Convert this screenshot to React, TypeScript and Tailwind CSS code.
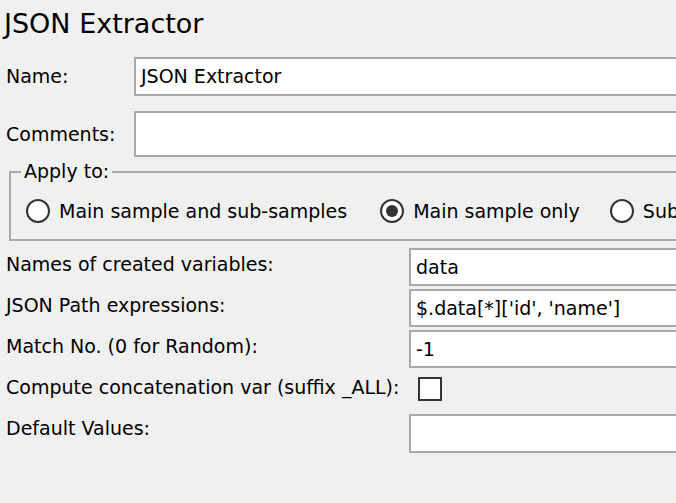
export default function App() {
  const f = { fontFamily: '"DejaVu Sans", sans-serif' };
  const input = "h-full bg-white border-2 border-[#a9a9a9] px-[5px] flex items-center";
  const Radio = ({ on }: { on?: boolean }) => (
    <span className="w-[24px] h-[24px] rounded-full border-2 border-[#333] bg-white flex items-center justify-center shrink-0">
      {on && <span className="w-[12px] h-[12px] rounded-full bg-[#333]" />}
    </span>
  );
  return (
    <div className="w-[676px] h-[503px] bg-[#f0f0f0] overflow-hidden text-[19px] text-black" style={f}>
      <div className="pl-[4px] pt-[6px] h-[48px] text-[27px] leading-[36px]">JSON Extractor</div>
      <div className="flex items-center h-[39px] mt-[9px] pl-[6px]">
        <span className="w-[128px]">Name:</span>
        <div className={input + " flex-1 -mr-[4px]"}>JSON Extractor</div>
      </div>
      <div className="flex items-center h-[46px] mt-[15px] pl-[6px]">
        <span className="w-[128px]">Comments:</span>
        <div className={input + " flex-1 -mr-[4px]"}></div>
      </div>
      <div className="relative ml-[9px] mt-[14px] h-[70px] border-2 border-[#a9a9a9] border-r-0">
        <span className="absolute -top-[15px] left-[10px] px-[3px] bg-[#f0f0f0] leading-[26px]">Apply to:</span>
        <div className="flex items-center h-full pt-[10px] pl-[15px] whitespace-nowrap overflow-hidden">
          <Radio />
          <span className="ml-[9px]">Main sample and sub-samples</span>
          <span className="ml-[33px]"><Radio on /></span>
          <span className="ml-[9px]">Main sample only</span>
          <span className="ml-[30px]"><Radio /></span>
          <span className="ml-[9px]">Sub-samples only</span>
        </div>
      </div>
      <div className="pl-[6px] mt-[7px]">
        {[
          ["Names of created variables:", "data"],
          ["JSON Path expressions:", "$.data[*]['id', 'name']"],
          ["Match No. (0 for Random):", "-1"],
        ].map(([l, v]) => (
          <div key={l} className="flex h-[38px] mb-[3px] items-center">
            <span className="w-[403px] self-start pt-[2px]">{l}</span>
            <div className={input + " flex-1 -mr-[4px]"}>{v}</div>
          </div>
        ))}
        <div className="flex h-[40px] items-start">
          <span className="w-[412px] whitespace-nowrap pt-[2px]">Compute concatenation var (suffix _ALL):</span>
          <span className="w-[24px] h-[24px] border-2 border-[#333] bg-white mt-[6px]" />
        </div>
        <div className="flex h-[39px] mt-[3px] items-center">
          <span className="w-[403px] self-start pt-[0px]">Default Values:</span>
          <div className={input + " flex-1 -mr-[4px]"}></div>
        </div>
      </div>
    </div>
  );
}
